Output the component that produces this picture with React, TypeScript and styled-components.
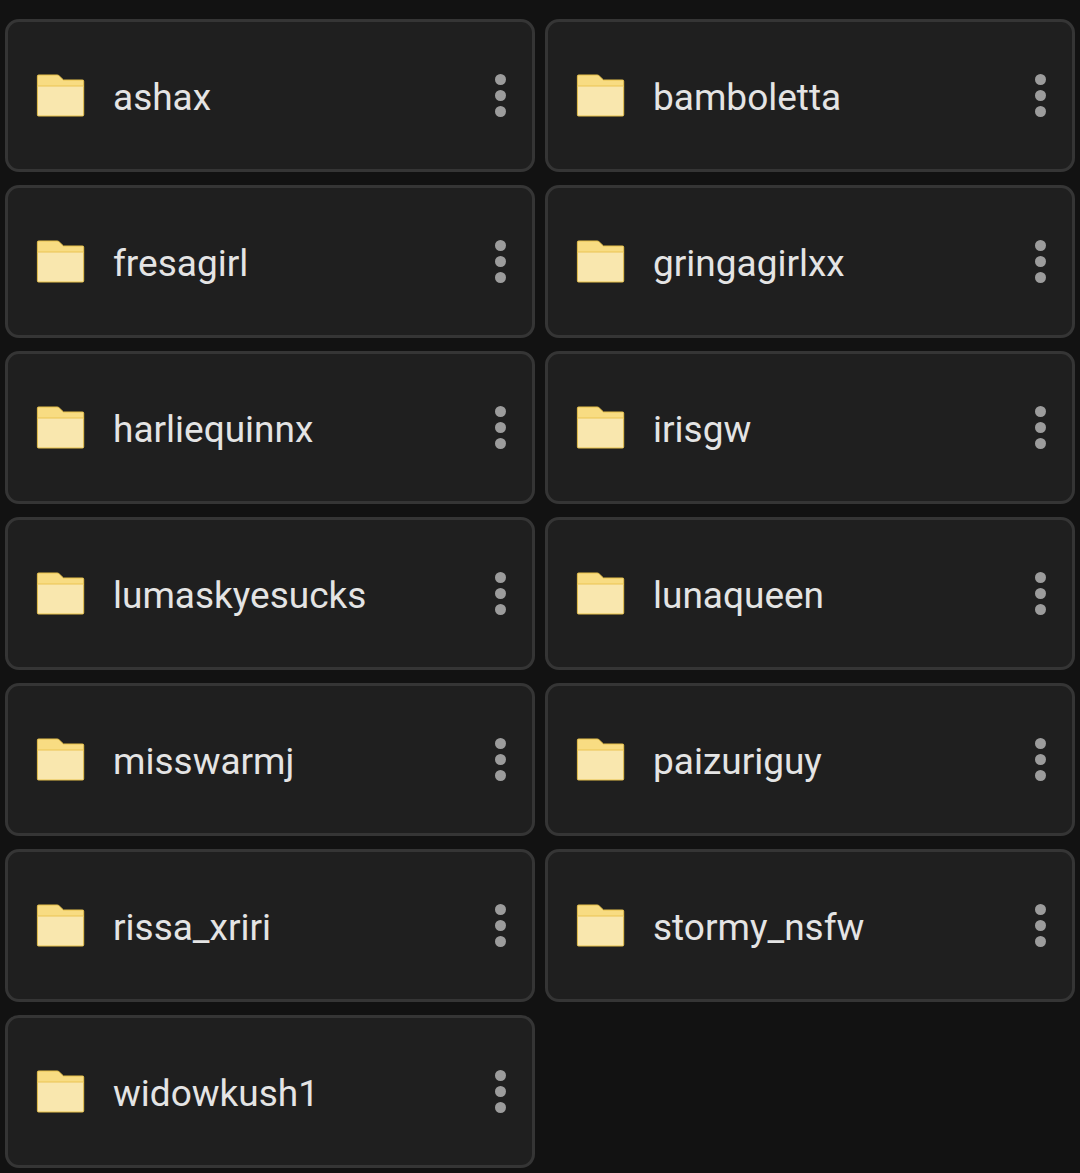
import React from "react";
import styled, { createGlobalStyle } from "styled-components";

const GlobalStyle = createGlobalStyle`
  body {
    margin: 0;
    background: #121212;
    font-family: Roboto, "Noto Sans", sans-serif;
  }
`;

const Grid = styled.main`
  display: grid;
  grid-template-columns: 1fr 1fr;
  grid-auto-rows: 153px;
  gap: 13px 10px;
  box-sizing: border-box;
  width: 1080px;
  height: 1173px;
  padding: 19px 5px 0;
  overflow: hidden;
  background: #121212;
`;

const Card = styled.article`
  display: flex;
  align-items: center;
  box-sizing: border-box;
  padding: 0 24px 0 28px;
  border: 3px solid #353535;
  border-radius: 14px;
  background: #1f1f1f;
`;

const FolderIcon = styled.svg`
  flex: none;
  width: 50px;
  height: 46px;
`;

const Name = styled.span`
  flex: 1;
  margin-left: 27px;
  padding-top: 5px;
  color: #e4e4e4;
  font-size: 37px;
  line-height: 44px;
  white-space: nowrap;
`;

const MenuButton = styled.button`
  display: flex;
  flex-direction: column;
  align-items: center;
  gap: 4.8px;
  padding: 0 2px;
  border: 0;
  background: none;
`;

const Dot = styled.span`
  width: 11px;
  height: 11px;
  border-radius: 50%;
  background: #9c9c9c;
`;

const folders = [
  "ashax",
  "bamboletta",
  "fresagirl",
  "gringagirlxx",
  "harliequinnx",
  "irisgw",
  "lumaskyesucks",
  "lunaqueen",
  "misswarmj",
  "paizuriguy",
  "rissa_xriri",
  "stormy_nsfw",
  "widowkush1",
];

function Folder() {
  return (
    <FolderIcon viewBox="0 0 50 46" aria-hidden="true">
      <path
        d="M2.6 2H21.2Q22.3 2 23.1 2.8L27.5 7H46.6Q47.7 7 47.7 8.1V14H1.4V3.1Q1.4 2 2.6 2Z"
        fill="#f8dc82"
      />
      <path d="M1.4 13H47.7V41.9Q47.7 43 46.6 43H2.5Q1.4 43 1.4 41.9Z" fill="#f9e7ae" />
      <path d="M1.4 13H47.7" stroke="#ebc453" strokeWidth="1" />
      <path
        d="M2.5 2H21.2Q22.3 2 23.1 2.8L27.5 7H46.6Q47.7 7 47.7 8.1V41.9Q47.7 43 46.6 43H2.5Q1.4 43 1.4 41.9V3.1Q1.4 2 2.5 2Z"
        fill="none"
        stroke="#e6c04b"
        strokeWidth="1"
      />
    </FolderIcon>
  );
}

export default function App() {
  return (
    <>
      <GlobalStyle />
      <Grid>
        {folders.map((name) => (
          <Card key={name}>
            <Folder />
            <Name>{name}</Name>
            <MenuButton aria-label={`Options for ${name}`}>
              <Dot />
              <Dot />
              <Dot />
            </MenuButton>
          </Card>
        ))}
      </Grid>
    </>
  );
}
